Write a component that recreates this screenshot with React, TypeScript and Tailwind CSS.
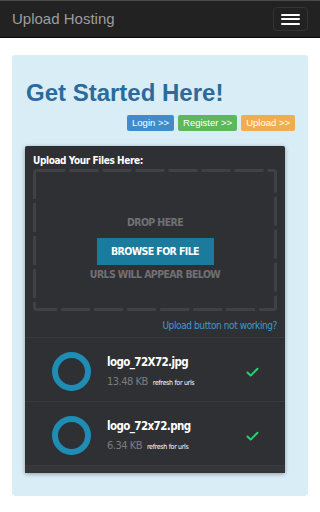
import { Check } from 'lucide-react';

const files = [
  { name: 'logo_72X72.jpg', size: '13.48 KB' },
  { name: 'logo_72x72.png', size: '6.34 KB' },
];

function DropZone() {
  return (
    <div className="relative mx-2 h-[142px] flex flex-col items-center pt-[46px]">
      <svg className="absolute inset-0 h-full w-full" preserveAspectRatio="none">
        <rect
          x="1.5"
          y="1.5"
          width="241"
          height="139"
          rx="2"
          fill="none"
          stroke="#3f4145"
          strokeWidth="3"
          strokeDasharray="29 4"
        />
      </svg>
      <div className="text-[10.5px] font-bold text-[#6f7175] leading-[14px] tracking-[-0.6px]">DROP HERE</div>
      <button className="mt-[9px] w-[117px] h-[27px] bg-[#1a7b9c] text-white text-[10.5px] font-bold tracking-[-0.6px]">
        BROWSE FOR FILE
      </button>
      <div className="mt-[2px] text-[10.5px] font-bold text-[#6f7175] leading-[14px] tracking-[-0.6px]">
        URLS WILL APPEAR BELOW
      </div>
    </div>
  );
}

function FileRow({ name, size }: { name: string; size: string }) {
  return (
    <div className="h-[64px] flex items-center border-t border-[#393a3d] pl-[27px] pr-[25px]">
      <div className="w-[39px] h-[39px] rounded-full border-[6px] border-[#1e8cb3] mt-[3px]" />
      <div className="ml-[16px] flex-1 mt-[6px]">
        <div className="text-white font-bold text-[11.5px] leading-[15px] tracking-[-0.6px]">{name}</div>
        <div className="mt-[4px] flex items-baseline">
          <span className="text-[#7b7d80] text-[11px] tracking-[-0.5px]">{size}</span>
          <span className="ml-[5px] text-white text-[7px] tracking-[-0.3px]">refresh for urls</span>
        </div>
      </div>
      <Check className="text-[#2ecc71] mt-[6px]" size={15} strokeWidth={3.2} />
    </div>
  );
}

export default function App() {
  return (
    <div className="w-[320px] h-[512px] bg-white font-['Liberation_Sans',Arial,sans-serif]">
      <nav className="h-[38px] bg-[#222222] border-t border-[#4a4a4a] border-b border-b-[#080808] flex items-center justify-between pl-[12px] pr-[12px]">
        <span className="text-[15px] text-[#9d9d9d]">Upload Hosting</span>
        <button className="w-[35px] h-[24px] border border-[#333333] rounded flex flex-col items-center justify-center gap-[2.5px]">
          <span className="block w-[19px] h-[2px] bg-white rounded-sm" />
          <span className="block w-[19px] h-[2px] bg-white rounded-sm" />
          <span className="block w-[19px] h-[2px] bg-white rounded-sm" />
        </button>
      </nav>

      <div className="mx-[12px] mt-[17px] h-[441px] bg-[#d9edf7] rounded-[4px] pt-[23px] pl-[13px]">
        <h1 className="pl-[1px] text-[24px] leading-[30px] font-bold text-[#2b6a9a]">Get Started Here!</h1>
        <div className="mt-[7px] flex justify-end gap-[4px] pr-[13px]">
          <span className="h-[16px] px-[5px] bg-[#428bca] text-white text-[9.5px] leading-[16px] rounded-[2px]">Login &gt;&gt;</span>
          <span className="h-[16px] px-[5px] bg-[#5cb85c] text-white text-[9.5px] leading-[16px] rounded-[2px]">Register &gt;&gt;</span>
          <span className="h-[16px] px-[5px] bg-[#f0ad4e] text-white text-[9.5px] leading-[16px] rounded-[2px]">Upload &gt;&gt;</span>
        </div>

        <div className="mt-[15px] w-[260px] bg-[#2f3033] rounded-[2px] shadow-[0_1px_4px_rgba(0,0,0,0.35)] font-['DejaVu_Sans_Condensed','DejaVu_Sans',sans-serif] tracking-[-0.4px]">
          <div className="pl-[8px] pt-[8px] h-[23px] text-white text-[10px] font-bold leading-[13px]">Upload Your Files Here:</div>
          <DropZone />
          <div className="h-[26px] pr-[8px] text-right text-[#3d9ad1] text-[10px] leading-[30px]">Upload button not working?</div>
          {files.map((f) => (
            <FileRow key={f.name} name={f.name} size={f.size} />
          ))}
          <div className="h-[8px] bg-[#353639] border-t border-[#393a3d]" />
        </div>
      </div>
    </div>
  );
}
